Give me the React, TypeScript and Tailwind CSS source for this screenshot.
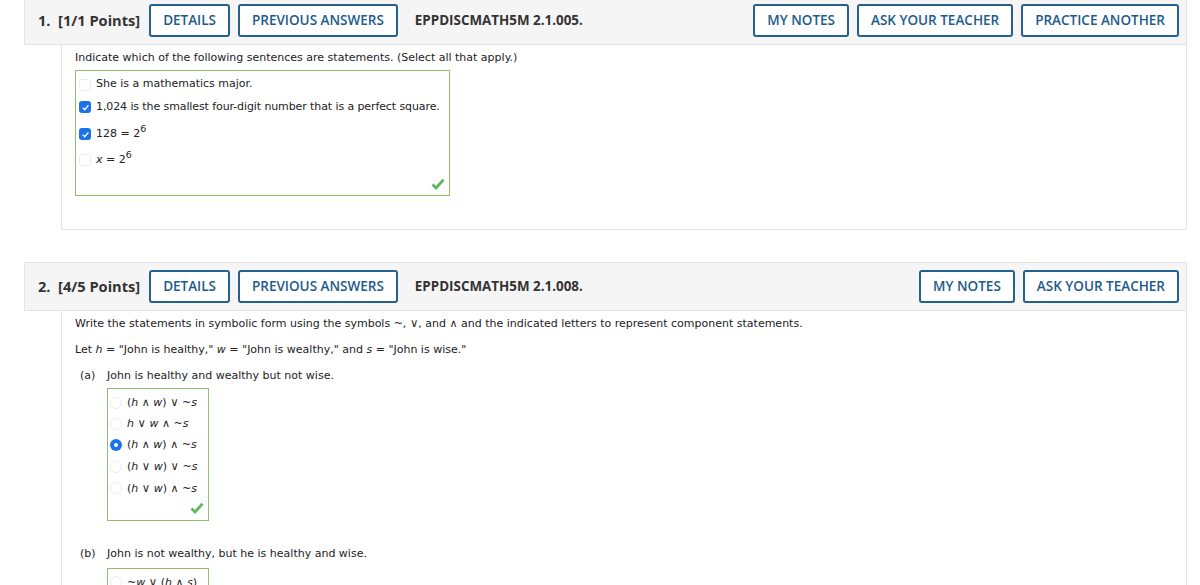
import React from "react";

const Btn = ({ label }: { label: string }) => (
  <button className="h-[33px] rounded-[3px] border-2 border-[#25618f] bg-white px-[12px] text-[13.5px] font-semibold text-[#1d5b8a]">
    {label}
  </button>
);

const Header = ({
  num,
  points,
  code,
  right,
}: {
  num: string;
  points: string;
  code: string;
  right: string[];
}) => (
  <div className="flex h-[49px] items-center border border-[#e4e4e4] bg-[#f5f5f5] pl-[13px] pr-[7px]">
    <span className="mr-[9px] text-[14.6px] font-bold text-[#333]">
      {num}&nbsp; {points}
    </span>
    <div className="flex gap-[8px]">
      <Btn label="DETAILS" />
      <Btn label="PREVIOUS ANSWERS" />
    </div>
    <span className="ml-[17px] text-[13.4px] font-bold text-[#333]">{code}</span>
    <div className="ml-auto flex gap-[8px]">
      {right.map((r) => (
        <Btn key={r} label={r} />
      ))}
    </div>
  </div>
);

const Check = ({ on }: { on?: boolean }) =>
  on ? (
    <span className="flex h-[12px] w-[12px] shrink-0 items-center justify-center rounded-[3px] bg-[#1a73e8]">
      <svg width="9" height="9" viewBox="0 0 10 10">
        <path d="M2 5.2 L4.2 7.4 L8.2 2.6" fill="none" stroke="white" strokeWidth="1.6" />
      </svg>
    </span>
  ) : (
    <span className="h-[12px] w-[12px] shrink-0 rounded-[3px] border border-[#ededed] bg-white" />
  );

const Radio = ({ on }: { on?: boolean }) =>
  on ? (
    <span className="flex h-[12px] w-[12px] shrink-0 items-center justify-center rounded-full bg-[#1a73e8]">
      <span className="h-[4px] w-[4px] rounded-full bg-white" />
    </span>
  ) : (
    <span className="h-[12px] w-[12px] shrink-0 rounded-full border border-[#ededed] bg-white" />
  );

const Tick = () => (
  <svg width="14" height="12" viewBox="0 0 14 12">
    <path d="M1.5 6.5 L5 10 L12.5 1.8" fill="none" stroke="#5cb85c" strokeWidth="2.8" />
  </svg>
);

const I = ({ children }: { children: React.ReactNode }) => <i>{children}</i>;
const And = () => <span className="text-[11px]">∧</span>;
const Or = () => <span className="text-[11.5px]">∨</span>;

const radios: React.ReactNode[] = [
  <>
    (<I>h</I> <And /> <I>w</I>) <Or /> ~<I>s</I>
  </>,
  <>
    <I>h</I> <Or /> <I>w</I> <And /> ~<I>s</I>
  </>,
  <>
    (<I>h</I> <And /> <I>w</I>) <And /> ~<I>s</I>
  </>,
  <>
    (<I>h</I> <Or /> <I>w</I>) <Or /> ~<I>s</I>
  </>,
  <>
    (<I>h</I> <Or /> <I>w</I>) <And /> ~<I>s</I>
  </>,
];

export default function App() {
  return (
    <div className="-mt-[4px] min-h-screen overflow-hidden bg-white pb-[40px] font-['Open_Sans',sans-serif]">
      {/* question 1 */}
      <div className="ml-[24px] mr-[13px]">
        <Header
          num="1."
          points="[1/1 Points]"
          code="EPPDISCMATH5M 2.1.005."
          right={["MY NOTES", "ASK YOUR TEACHER", "PRACTICE ANOTHER"]}
        />
        <div className="ml-[37px] h-[185px] rounded-br-[3px] border-x border-b border-[#e4e4e4] pl-[13px] pt-[5px] font-['DejaVu_Sans',sans-serif] text-[11px] text-[#222]">
          <p className="leading-[16px]">
            Indicate which of the following sentences are statements. (Select all that apply.)
          </p>
          <div className="mt-[4px] flex w-[375px] flex-col whitespace-nowrap border border-[#8fc071] pl-[3px] pr-[4px]">
            <div className="flex h-[24px] items-center gap-[5px] pt-[3px]">
              <Check />
              <span>She is a mathematics major.</span>
            </div>
            <div className="flex h-[24px] items-center gap-[5px]">
              <Check on />
              <span className="tracking-[-0.1px]">
                1,024 is the smallest four-digit number that is a perfect square.
              </span>
            </div>
            <div className="flex h-[28px] items-center gap-[5px] pt-[2px]">
              <Check on />
              <span>
                128 = 2<sup className="text-[9.5px]">6</sup>
              </span>
            </div>
            <div className="flex h-[26px] items-center gap-[5px]">
              <Check />
              <span>
                <I>x</I> = 2<sup className="text-[9.5px]">6</sup>
              </span>
            </div>
            <div className="flex h-[22px] items-center justify-end">
              <Tick />
            </div>
          </div>
        </div>
      </div>

      {/* question 2 */}
      <div className="ml-[24px] mr-[13px] mt-[32px]">
        <Header
          num="2."
          points="[4/5 Points]"
          code="EPPDISCMATH5M 2.1.008."
          right={["MY NOTES", "ASK YOUR TEACHER"]}
        />
        <div className="ml-[37px] border-x border-[#e4e4e4] pl-[13px] pt-[4px] font-['DejaVu_Sans',sans-serif] text-[11px] text-[#222]">
          <p className="leading-[16px]">
            Write the statements in symbolic form using the symbols ~, <Or />, and <And /> and the
            indicated letters to represent component statements.
          </p>
          <p className="mt-[10px] leading-[16px]">
            Let <I>h</I> = "John is healthy," <I>w</I> = "John is wealthy," and <I>s</I> = "John is
            wise."
          </p>
          <div className="mt-[10px] flex leading-[16px]">
            <span className="w-[32px] pl-[5px]">(a)</span>
            <span>John is healthy and wealthy but not wise.</span>
          </div>
          <div className="ml-[32px] mt-[4px] flex w-[102px] flex-col whitespace-nowrap border border-[#8fc071] pl-[2px] pr-[4px] pt-[3px]">
            {radios.map((r, i) => (
              <div key={i} className="flex h-[21.4px] items-center gap-[5px]">
                <Radio on={i === 2} />
                <span>{r}</span>
              </div>
            ))}
            <div className="flex h-[21px] items-center justify-end pb-[2px]">
              <Tick />
            </div>
          </div>
          <div className="mt-[25px] flex leading-[16px]">
            <span className="w-[32px] pl-[5px]">(b)</span>
            <span>John is not wealthy, but he is healthy and wise.</span>
          </div>
          <div className="ml-[32px] mt-[6px] flex w-[102px] flex-col whitespace-nowrap border border-[#8fc071] pl-[2px] pt-[3px]">
            <div className="flex h-[21px] items-center gap-[5px]">
              <Radio />
              <span>
                ~<I>w</I> <Or /> (<I>h</I> <And /> <I>s</I>)
              </span>
            </div>
            <div className="h-[40px]" />
          </div>
        </div>
      </div>
    </div>
  );
}
